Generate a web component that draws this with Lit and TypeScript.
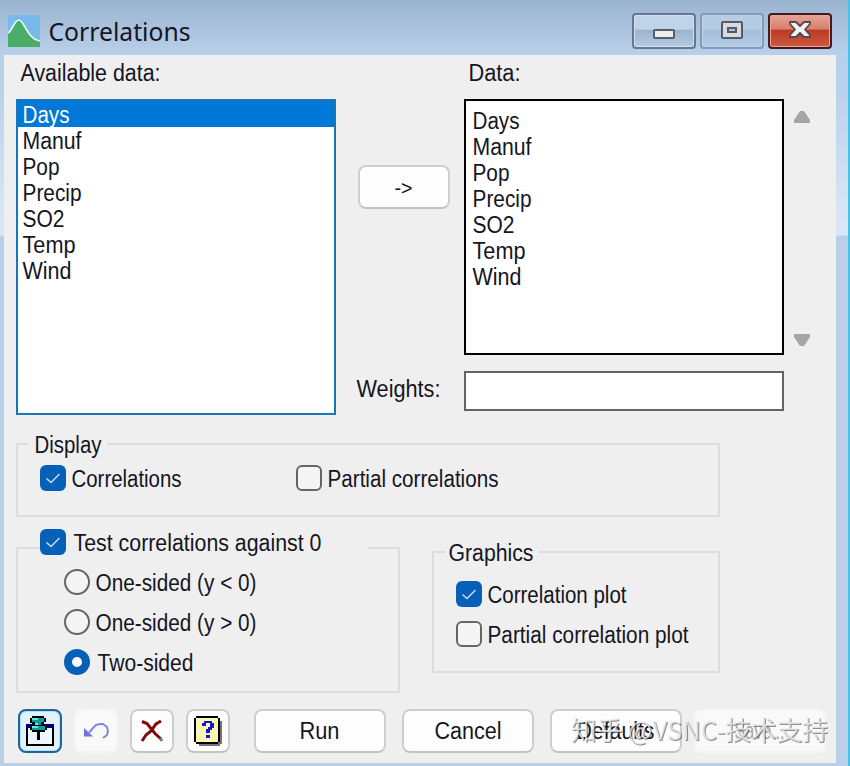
import { LitElement, html, css } from "lit";
import { customElement, property } from "lit/decorators.js";

@customElement("fit-text")
class FitText extends LitElement {
  @property() text = "";
  @property({ type: Number }) w = 50;
  @property({ type: Number }) size = 23;
  static styles = css`
    :host { display: block; flex: none; height: 26px; }
    svg { display: block; overflow: visible; }
    text { font-family: var(--face, "Liberation Sans"), Arial, sans-serif; fill: currentColor; }
  `;
  render() {
    return html`<svg width=${this.w} height="26">
      <text x="0.5" y="22" font-size=${this.size} textLength=${this.w} lengthAdjust="spacingAndGlyphs">${this.text}</text>
    </svg>`;
  }
}

const t = (text: string, w: number, size = 23) => html`<fit-text .text=${text} .w=${w} .size=${size}></fit-text>`;

const items: [string, number][] = [
  ["Days", 47], ["Manuf", 59], ["Pop", 37], ["Precip", 59], ["SO2", 42], ["Temp", 53], ["Wind", 49],
];

const check = (on: boolean, label: string, w: number) => html`
  <div class="option">
    <span class="box ${on ? "on" : ""}">
      ${on ? html`<svg width="26" height="26"><path d="M6.5 13.5l4.5 4L19.5 9" fill="none" stroke="#c4dcf5" stroke-width="1.5"/></svg>` : ""}
    </span>${t(label, w)}
  </div>`;

const radio = (on: boolean, label: string, w: number) => html`
  <div class="option"><span class="dot ${on ? "on" : ""}"></span>${t(label, w)}</div>`;

const pinIcon = html`<svg width="28" height="30" shape-rendering="crispEdges">
  <path d="M0 8h28v22H0z" fill="#000"/><path d="M2 12h24v16H2z" fill="#eef7fd"/>
  <path d="M0 8h28v4H0z" fill="#000070"/>
  <path d="M6 0h12v2h2v4h-2v3h2v2h1v3h-2v2H6v-2H4v-4h2V7H4V2h2z" fill="#000"/>
  <path d="M6 2h12v4H6zM9 6h6v3H9zM6 10h13v4H6z" fill="#0f9c9f"/>
  <path d="M6 2h6v2H6zM9 7h3v2H9zM6 10h6v2H6z" fill="#55eeee"/>
  <path d="M11 16h3v8h-3z" fill="#000"/>
</svg>`;

const undoIcon = html`<svg width="26" height="18">
  <path d="M1 6l9 8.500H1z" fill="#7272dc"/>
  <path d="M5 12l5-6 3-3 4-1h3l4 3 1 4-1 4-4 3" fill="none" stroke="#8585e0" stroke-width="2"/>
</svg>`;

const crossIcon = html`<svg width="24" height="24">
  <path d="M2 2.500l5 2 4 5 4 5 6 5.500M21 2l-5 3-5 7-5 4-4 6" fill="none" stroke="#7b0d10" stroke-width="3"/>
  <path d="M20 19l2 3" stroke="#777" stroke-width="3"/>
</svg>`;

const helpIcon = html`<svg width="28" height="30" shape-rendering="crispEdges">
  <path d="M4 3h22v2h2v23h-2v2H5v-2H4z" fill="#77717c"/>
  <path d="M2 0h22v2h2v24h-2v2H2v-2H0V2h2z" fill="#000"/>
  <path d="M2 2h22v24H2z" fill="#f8f7b4"/>
  <path d="M8 10V7h2V5h8v2h2v5h-2v2h-2v3h-4v-4h2v-2h2V7h-4v3zM12 19h4v3h-4z" fill="#1818c5"/>
</svg>`;

@customElement("app-root")
class AppRoot extends LitElement {
  static styles = css`
    :host { display: block; width: 850px; height: 766px; overflow: hidden; position: relative; color: #15151f; }
    * { box-sizing: border-box; }
    svg { display: block; flex: none; }
    .window { width: 850px; height: 766px; border-right: 2px solid #49c2ea;
      background: linear-gradient(#9bb5d1 0, #a9c2dd 28px, #b8cfe9 55px, #b9d1ea 90px, #d5e4f4 200px, #d9e7f6 235px, #b9d0e8 236px); }
    .titlebar { height: 55px; display: flex; align-items: flex-start; padding: 0 16px 0 8px;
      background: linear-gradient(#9ab4cf, #a8c0db 45%, #b8d0ea); }
    .logo { margin-top: 15px; }
    .title { margin: 19px 0 0 8px; --face: "Noto Sans"; }
    .controls { margin: 13px 0 0 auto; display: flex; gap: 4px; }
    .ctl { width: 64px; height: 36px; border: 2px solid #66788f; border-radius: 4px; display: flex; align-items: center; justify-content: center;
      box-shadow: inset 0 0 0 1px #d0e0f1; background: linear-gradient(#c0d3e8 0 45%, #9bb4ce 46%, #b3cbe4); }
    .ctl.min { padding-top: 6px; }
    .ctl.dim { padding-bottom: 2px; border-color: #859cb9; background: linear-gradient(#b6cce4 0 45%, #a3bdd9 46%, #b4cce6); box-shadow: inset 0 0 0 1px #bfd3e9; }
    .ctl.close { padding-bottom: 3px; border-color: #421920; box-shadow: inset 0 0 0 1px #e8a598; background: linear-gradient(#e6a397 0, #d67d6c 45%, #ba3820 46%, #cf5a40); }
    .client { margin-left: 4px; width: 832px; height: 708px; background: #efefef; display: flex; flex-direction: column; padding-left: 12px; }
    .top { display: flex; height: 360px; flex: none; }
    .col { width: 320px; display: flex; flex-direction: column; }
    .cap { height: 44px; padding: 4px 0 0 4px; flex: none; }
    .list { background: #fff; border: 2px solid #1878b6; height: 316px; }
    .row { padding-left: 4px; height: 26px; }
    .row.sel { background: #0078d7; color: #fff; }
    .list.data { height: 256px; border-color: #000; padding: 6px 0 0 2px; }
    .entry { margin-top: 16px; height: 40px; border: 2px solid #646464; background: #fff; }
    .mid { width: 128px; display: flex; flex-direction: column; padding: 110px 0 0 20px; }
    .btn { height: 44px; width: 132px; border: 2px solid #cecece; border-bottom-color: #c2c2c2; border-radius: 8px; background: #fdfdfd;
      display: flex; align-items: center; justify-content: center; flex: none; }
    .btn fit-text { margin: -2px 2px 0 0; }
    .mid .btn { width: 92px; margin-left: 2px; }
    .weights { margin-top: 166px; }
    .arrows { padding: 55px 0 0 9px; display: flex; flex-direction: column; gap: 209px; }
    .group { border: 2px solid #dcdcdc; position: relative; }
    .legend { position: absolute; background: #efefef; height: 26px; }
    .display { width: 704px; height: 74px; margin-top: 28px; padding: 20px 0 0 22px; display: flex; flex: none; }
    .display .option { width: 256px; }
    .display .legend { left: 10px; top: -14px; padding: 0 6px; }
    .option { display: flex; height: 26px; gap: 5px; }
    .box { width: 26px; height: 26px; border: 2px solid #656565; border-radius: 6px; background: #f5f5f5; flex: none; }
    .box.on { border: 0; background: #0760b7; }
    .dot { width: 26px; height: 26px; border: 2px solid #656565; border-radius: 50%; background: #f4f4f4; flex: none; }
    .dot.on { border: 8px solid #0760b7; background: #fff; margin-right: 2px; }
    .groups { display: flex; gap: 32px; margin-top: 30px; height: 146px; align-items: flex-start; flex: none; }
    .tests { width: 384px; height: 146px; padding: 20px 0 0 46px; display: flex; flex-direction: column; gap: 14px; }
    .tests .legend { left: 22px; top: -20px; width: 328px; }
    .tests .legend .option { gap: 7px; }
    .graphics { width: 288px; height: 122px; margin-top: 4px; padding: 28px 0 0 22px; display: flex; flex-direction: column; gap: 14px; }
    .graphics .legend { left: 11px; top: -14px; padding: 0 6px 0 3px; }
    .bar { margin: 16px 0 0 2px; display: flex; gap: 16px; height: 44px; }
    .tools { display: flex; gap: 12px; width: 220px; }
    .btn.tool { width: 44px; }
    .btn.pin { border-color: #1b669b; background: #e3f1fa; box-shadow: inset 0 0 0 1px #b9dcf0; }
    .btn.off { border-color: #f6f6f6; background: #f9f9f9; color: #a5a5a5; }
    .save { margin-left: -4px; }
    .mark { position: absolute; left: 571px; top: 714px; }
    .mark svg { overflow: visible; }
    .mark text { font-family: "Noto Sans CJK SC", sans-serif; fill: rgba(235,235,235,.8); filter: drop-shadow(1px 1px 0.5px rgba(70,70,70,.75)); }
  `;

  render() {
    return html`
      <div class="window">
        <div class="titlebar">
          <svg class="logo" width="32" height="32">
            <path d="M0 0h32v32H0z" fill="#77b9e9"/>
            <path d="M0 18C5 15 6 5 11 5s8 19 21 21v6H0z" fill="#4bae68"/>
            <path d="M0 18C5 15 6 5 11 5s8 19 21 21" fill="none" stroke="#eefafa" stroke-width="1.7"/>
          </svg>
          <div class="title">${t("Correlations", 142, 25)}</div>
          <div class="controls">
            <div class="ctl min"><svg width="22" height="10"><rect x="1" y="1" width="20" height="8" rx="1" fill="#eee" stroke="#575c68" stroke-width="2"/></svg></div>
            <div class="ctl dim"><svg width="22" height="18"><rect x="1" y="1" width="20" height="16" rx="1" fill="#dbdbdf" stroke="#565a67" stroke-width="2"/><rect x="7" y="7" width="8" height="4" fill="#a9bfda" stroke="#565a67" stroke-width="2"/></svg></div>
            <div class="ctl close"><svg width="24" height="18"><path d="M2 1h6l4 4 4-4h6v2l-5 5.500 5 5.500v2h-6l-4-4-4 4H2v-2l5-5.500L2 3z" fill="#f1f1f1" stroke="#5a4550" stroke-width="1.800" stroke-linejoin="round"/></svg></div>
          </div>
        </div>
        <div class="client">
          <div class="top">
            <div class="col">
              <div class="cap">${t("Available data:", 140)}</div>
              <div class="list">${items.map(([n, w], i) => html`<div class="row ${i === 0 ? "sel" : ""}">${t(n, w)}</div>`)}</div>
            </div>
            <div class="mid">
              <div class="btn">${t("->", 18, 20)}</div>
              <div class="weights">${t("Weights:", 84)}</div>
            </div>
            <div class="col">
              <div class="cap">${t("Data:", 52)}</div>
              <div class="list data">${items.map(([n, w]) => html`<div class="row">${t(n, w)}</div>`)}</div>
              <div class="entry"></div>
            </div>
            <div class="arrows">
              <svg width="18" height="14"><path d="M1 13v-3L7 1h4l6 9v3z" fill="#a5a5a5"/></svg>
              <svg width="18" height="14"><path d="M1 1h16v3l-6 9H7L1 4z" fill="#a5a5a5"/></svg>
            </div>
          </div>
          <div class="group display">
            <div class="legend">${t("Display", 67)}</div>
            ${check(true, "Correlations", 110)}
            ${check(false, "Partial correlations", 171)}
          </div>
          <div class="groups">
            <div class="group tests">
              <div class="legend">${check(true, "Test correlations against 0", 248)}</div>
              ${radio(false, "One-sided (y < 0)", 161)}
              ${radio(false, "One-sided (y > 0)", 161)}
              ${radio(true, "Two-sided", 96)}
            </div>
            <div class="group graphics">
              <div class="legend">${t("Graphics", 85)}</div>
              ${check(true, "Correlation plot", 139)}
              ${check(false, "Partial correlation plot", 201)}
            </div>
          </div>
          <div class="bar">
            <div class="tools">
              <div class="btn tool pin">${pinIcon}</div>
              <div class="btn tool off">${undoIcon}</div>
              <div class="btn tool">${crossIcon}</div>
              <div class="btn tool">${helpIcon}</div>
            </div>
            <div class="btn">${t("Run", 40)}</div>
            <div class="btn">${t("Cancel", 67)}</div>
            <div class="btn">${t("Defaults", 78)}</div>
            <div class="btn off save">${t("Save...", 50)}</div>
          </div>
        </div>
      </div>
      <div class="mark"><svg width="257" height="34"><text x="0" y="26" font-size="26" textLength="257" lengthAdjust="spacingAndGlyphs">知乎 @VSNC-技术支持</text></svg></div>
    `;
  }
}
